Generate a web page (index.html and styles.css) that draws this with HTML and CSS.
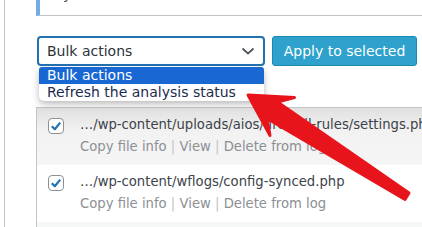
FILE: index.html
```html
<!DOCTYPE html>
<html lang="en">
	<head>
		<title>Scan log</title>
		<meta charset="UTF-8" />
		<link rel="stylesheet" href="styles.css">
	</head>
	<body>
		<div class="page">
			<!-- notice box, cut by the top of the window -->
			<div class="notice">
				<p>by</p>
			</div>

			<!-- bulk actions -->
			<div class="bulk-bar">
				<div class="select-wrap">
					<div class="select-box">
						<span>Bulk actions</span>
						<svg class="chevron" width="14" height="8" viewBox="0 0 14 8">
							<path d="M1.5 1.5 L7 6.5 L12.5 1.5" fill="none" stroke="#50575e" stroke-width="1.8"/>
						</svg>
					</div>
					<ul class="dropdown">
						<li class="selected">Bulk actions</li>
						<li>Refresh the analysis status</li>
					</ul>
				</div>
				<button class="apply-button" type="button">Apply to selected</button>
			</div>

			<!-- file list -->
			<div class="file-list">
				<div class="file-row shaded">
					<span class="check">
						<svg width="16" height="16" viewBox="0 0 16 16">
							<path d="M3.8 8.2 L6.8 11.2 L12.2 4.6" fill="none" stroke="#2271b1" stroke-width="2.2" stroke-linejoin="round"/>
						</svg>
					</span>
					<div class="file-info">
						<div class="file-path">…/wp-content/uploads/aios/firewall-rules/settings.php</div>
						<div class="row-actions">Copy file info <span class="sep">|</span> View <span class="sep">|</span> Delete from log</div>
					</div>
				</div>
				<div class="file-row">
					<span class="check">
						<svg width="16" height="16" viewBox="0 0 16 16">
							<path d="M3.8 8.2 L6.8 11.2 L12.2 4.6" fill="none" stroke="#2271b1" stroke-width="2.2" stroke-linejoin="round"/>
						</svg>
					</span>
					<div class="file-info">
						<div class="file-path">…/wp-content/wflogs/config-synced.php</div>
						<div class="row-actions">Copy file info <span class="sep">|</span> View <span class="sep">|</span> Delete from log</div>
					</div>
				</div>
				<div class="file-row striped"></div>
			</div>
		</div>

		<!-- red pointer drawn over the screenshot -->
		<svg class="pointer" width="422" height="227" viewBox="0 0 422 227">
			<polygon points="248,95 294.5,97.5 277.5,102 409,193 405,199.5 267,118.5 270,135.5"
				fill="#e8141b" stroke="#e8141b" stroke-width="3" stroke-linejoin="round"/>
		</svg>
	</body>
</html>
```

FILE: styles.css
```css
body {
	margin: 0;
	height: 227px;
	overflow: hidden;
	background: #fff;
	font-family: "DejaVu Sans", Verdana, sans-serif;
	position: relative;
}

.page {
	margin-left: 4px;
	padding-left: 31px;
	border-left: 1px solid #c3c4c7;
	height: 227px;
	overflow: hidden;
}

.notice {
	margin-top: -16px;
	padding: 0 12px 11px;
	border-left: 4px solid #72aee6;
	border-bottom: 1px solid #c3c4c7;
	font-size: 14px;
	line-height: 20px;
	color: #3c434a;
}
.notice p {
	margin: 0;
	padding-left: 2px;
}

.bulk-bar {
	display: flex;
	gap: 7px;
	margin-top: 20px;
	padding-left: 1px;
}

.select-wrap {
	position: relative;
}

.select-box {
	box-sizing: border-box;
	width: 228px;
	height: 30px;
	border: 2px solid #2271b1;
	border-radius: 4px;
	padding: 0 8px;
	display: flex;
	align-items: center;
	justify-content: space-between;
	font-size: 14px;
	color: #2c3338;
}

.dropdown {
	position: absolute;
	top: 31px;
	left: 2px;
	width: 225px;
	margin: 0;
	padding: 0;
	list-style: none;
	background: #fff;
	border-radius: 3px 3px 5px 5px;
	box-shadow: 0 3px 7px rgba(0, 0, 0, 0.28);
	font-size: 14px;
	color: #1d2b4f;
	overflow: hidden;
	z-index: 2;
}
.dropdown li {
	height: 17px;
	line-height: 17px;
	padding-left: 8px;
}
.dropdown .selected {
	background: #1967d2;
	color: #fff;
}

.apply-button {
	box-sizing: border-box;
	width: 145px;
	height: 30px;
	background: #2ea2cc;
	border: 1px solid #1b88b4;
	border-radius: 3px;
	color: #fff;
	font-family: inherit;
	font-size: 14px;
	padding: 0;
}

.file-list {
	margin-top: 41px;
	border-top: 1px solid #c3c4c7;
	border-left: 1px solid #c3c4c7;
}

.file-row {
	display: flex;
	gap: 16px;
	height: 57px;
	box-sizing: border-box;
	padding: 6px 0 7px 11px;
	background: #fff;
}
.file-row.shaded {
	background: linear-gradient(#e0e0e0, #f2f2f2 40%, #f5f5f5);
}
.file-row.striped {
	background: #f6f7f7;
}

.check {
	box-sizing: border-box;
	width: 16px;
	height: 16px;
	margin-top: 4px;
	border: 1px solid #8c8f94;
	border-radius: 4px;
	background: #fff;
	flex-shrink: 0;
}
.check svg {
	display: block;
	margin: -1px 0 0 -1px;
}

.file-info {
	white-space: nowrap;
	font-size: 13.2px;
	line-height: 22px;
}
.file-path {
	color: #3c434a;
}
.row-actions {
	color: #8c8f94;
}
.row-actions .sep {
	color: #c3c4c7;
}

.pointer {
	position: absolute;
	top: 0;
	left: 0;
	pointer-events: none;
	z-index: 3;
}
```
